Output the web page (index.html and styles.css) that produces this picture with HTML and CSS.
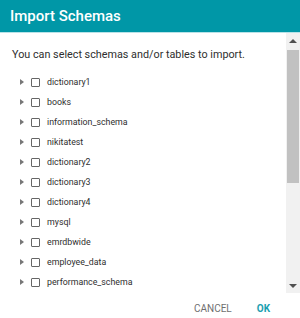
FILE: index.html
```html
<!DOCTYPE html>
<html>
<head>
<meta charset="utf-8">
<link rel="stylesheet" href="styles.css">
</head>
<body>
<div class="dialog">
  <div class="header">Import Schemas</div>
  <div class="body">
    <div class="content">
      <p class="intro">You can select schemas and/or tables to import.</p>
      <ul class="tree">
        <li class="row"><span class="caret"></span><span class="box"></span><span class="label">dictionary1</span></li>
        <li class="row"><span class="caret"></span><span class="box"></span><span class="label">books</span></li>
        <li class="row"><span class="caret"></span><span class="box"></span><span class="label">information_schema</span></li>
        <li class="row"><span class="caret"></span><span class="box"></span><span class="label">nikitatest</span></li>
        <li class="row"><span class="caret"></span><span class="box"></span><span class="label">dictionary2</span></li>
        <li class="row"><span class="caret"></span><span class="box"></span><span class="label">dictionary3</span></li>
        <li class="row"><span class="caret"></span><span class="box"></span><span class="label">dictionary4</span></li>
        <li class="row"><span class="caret"></span><span class="box"></span><span class="label">mysql</span></li>
        <li class="row"><span class="caret"></span><span class="box"></span><span class="label">emrdbwide</span></li>
        <li class="row"><span class="caret"></span><span class="box"></span><span class="label">employee_data</span></li>
        <li class="row"><span class="caret"></span><span class="box"></span><span class="label">performance_schema</span></li>
      </ul>
    </div>
    <div class="scrollbar">
      <div class="arrow up"></div>
      <div class="track"><div class="thumb"></div></div>
      <div class="arrow down"></div>
    </div>
  </div>
  <div class="footer">
    <button class="btn cancel">CANCEL</button>
    <button class="btn ok">OK</button>
  </div>
</div>
</body>
</html>
```
FILE: styles.css
```css
html, body {
  margin: 0;
  padding: 0;
  background: #ffffff;
}
body {
  font-family: Roboto, "Liberation Sans", sans-serif;
  width: 300px;
  height: 318px;
  overflow: hidden;
}
.dialog {
  display: flex;
  flex-direction: column;
  height: 318px;
}
.header {
  flex: none;
  height: 33px;
  box-sizing: border-box;
  background: #0097a7;
  color: #ffffff;
  font-size: 15px;
  font-weight: 500;
  line-height: 32px;
  padding-left: 10px;
  border-bottom: 1px solid #b9e2e7;
}
.body {
  flex: none;
  height: 260px;
  display: flex;
}
.content {
  flex: 1;
  overflow: hidden;
}
.intro {
  margin: 0;
  padding: 15px 0 0 12px;
  font-size: 10.8px;
  line-height: 13px;
  color: #2e2e2e;
}
.tree {
  list-style: none;
  margin: 0;
  padding: 11px 0 0 20px;
}
.row {
  display: flex;
  align-items: center;
  height: 20px;
}
.caret {
  width: 0;
  height: 0;
  border-left: 4px solid #777777;
  border-top: 3px solid transparent;
  border-bottom: 3px solid transparent;
  margin-right: 7px;
}
.box {
  width: 7px;
  height: 7px;
  border: 1px solid #666666;
  border-radius: 1px;
  margin-right: 7px;
}
.label {
  font-size: 8.8px;
  color: #2e2e2e;
}
.scrollbar {
  flex: none;
  width: 14px;
  background: #f1f1f1;
  display: flex;
  flex-direction: column;
}
.arrow {
  flex: none;
  height: 15px;
  display: flex;
  align-items: center;
  justify-content: center;
}
.arrow::before {
  content: "";
  width: 0;
  height: 0;
  border-left: 4px solid transparent;
  border-right: 4px solid transparent;
}
.up::before {
  border-bottom: 4px solid #505050;
}
.down::before {
  border-top: 4px solid #505050;
}
.track {
  flex: 1;
  padding: 2px 1px 0 1px;
}
.thumb {
  height: 133px;
  background: #c1c1c1;
}
.footer {
  flex: 1;
  display: flex;
  justify-content: flex-end;
  align-items: center;
  padding: 6px 30px 0 0;
}
.btn {
  border: none;
  background: none;
  font-family: Roboto, "Liberation Sans", sans-serif;
  font-size: 10px;
  font-weight: 500;
  padding: 0;
  margin: 0;
}
.cancel {
  color: #6f6f6f;
  font-weight: 400;
  margin-right: 25px;
}
.ok {
  color: #1aa0b0;
  font-weight: 700;
}
```
